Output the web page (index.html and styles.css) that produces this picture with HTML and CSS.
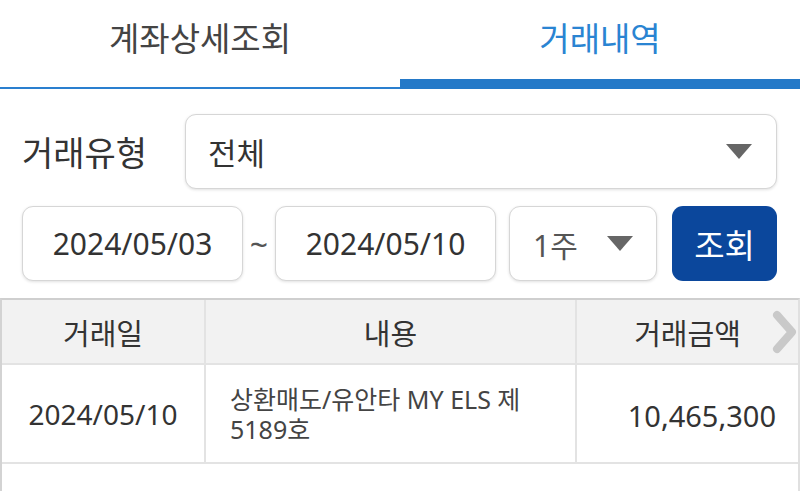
FILE: index.html
```html
<!DOCTYPE html>
<html lang="ko">
<head>
<meta charset="UTF-8" />
<meta name="viewport" content="width=device-width, initial-scale=1" />
<title>거래내역</title>
<link rel="stylesheet" href="styles.css">
</head>
<body>

<div class="tabs">
  <div class="tab">계좌상세조회</div>
  <div class="tab active">거래내역</div>
</div>

<div class="filter">
  <div class="row">
    <span class="label">거래유형</span>
    <div class="select wide">
      <span>전체</span>
      <span class="arrow"></span>
    </div>
  </div>
  <div class="row">
    <div class="date">2024/05/03</div>
    <span class="tilde">~</span>
    <div class="date">2024/05/10</div>
    <div class="select period">
      <span>1주</span>
      <span class="arrow"></span>
    </div>
    <button class="search">조회</button>
  </div>
</div>

<div class="grid">
  <div class="cell head">거래일</div>
  <div class="cell head">내용</div>
  <div class="cell head amount-head">
    거래금액
    <svg class="more" width="26" height="44" viewBox="0 0 26 44">
      <polyline points="5,5 20,22 5,39" fill="none" stroke="#c9c9c9" stroke-width="8" stroke-linecap="round" stroke-linejoin="round" />
    </svg>
  </div>
  <div class="cell day">2024/05/10</div>
  <div class="cell desc">
    <span class="line">상환매도/유안타 MY ELS 제</span>
    <span class="line">5189호</span>
  </div>
  <div class="cell amount">10,465,300</div>
  <div class="cell empty"></div>
</div>

</body>
</html>
```

FILE: styles.css
```css
body {
  margin: 0;
  padding: 0;
  background: #fff;
  color: #333;
  font-family: "Noto Sans", "Noto Sans CJK KR", sans-serif;
}
.tabs {
  display: flex;
}
.tab {
  flex: 1;
  box-sizing: border-box;
  height: 89px;
  padding-top: 17px;
  text-align: center;
  font-size: 33px;
  line-height: 44px;
  color: #444;
  border-bottom: 2px solid #2a7fcf;
}
.tab.active {
  color: #2a84d2;
  border-bottom: 10px solid #2479c8;
}
.filter {
  padding: 25px 23px 0 22px;
}
.row {
  display: flex;
  align-items: center;
  height: 75px;
  margin-bottom: 17px;
}
.label {
  width: 163px;
  font-size: 34px;
  color: #333;
}
.select, .date {
  box-sizing: border-box;
  height: 75px;
  border: 1px solid #d6d6d6;
  border-radius: 11px;
  box-shadow: 0 1px 3px rgba(0,0,0,0.12);
  background: #fff;
  display: flex;
  align-items: center;
}
.select.wide {
  flex: 1;
  justify-content: space-between;
  padding: 0 24px 0 22px;
  font-size: 31px;
}
.arrow {
  width: 0;
  height: 0;
  border-left: 13px solid transparent;
  border-right: 13px solid transparent;
  border-top: 15px solid #666;
}
.date {
  width: 221px;
  justify-content: center;
  font-size: 30px;
}
.tilde {
  width: 32px;
  text-align: center;
  font-size: 32px;
  color: #555;
}
.select.period {
  width: 148px;
  margin-left: 13px;
  justify-content: space-between;
  padding: 0 23px 0 23px;
  font-size: 30px;
  color: #555;
}
.search {
  width: 105px;
  height: 75px;
  margin-left: 15px;
  border: none;
  border-radius: 11px;
  background: #0b479c;
  color: #fff;
  font-family: inherit;
  font-size: 33px;
  padding: 0;
}
.grid {
  margin-top: 14px;
  display: grid;
  grid-template-columns: 204px 371px 1fr;
  grid-template-rows: 65px 99px 40px;
  border-top: 2px solid #cfcfcf;
  border-left: 2px solid #d3d3d3;
  border-right: 2px solid #e0e0e0;
}
.cell {
  display: flex;
  align-items: center;
  border-bottom: 2px solid #e3e3e3;
  border-right: 2px solid #e3e3e3;
  font-size: 28px;
  color: #333;
}
.cell:nth-child(3n), .cell.empty {
  border-right: none;
}
.head {
  background: #f2f2f2;
  justify-content: center;
  font-size: 29px;
}
.amount-head {
  position: relative;
}
.more {
  position: absolute;
  right: 0;
  top: 10px;
}
.day {
  justify-content: center;
}
.desc {
  flex-direction: column;
  align-items: flex-start;
  justify-content: center;
  padding-left: 24px;
  font-size: 25px;
  color: #444;
}
.line {
  display: block;
  height: 30px;
  line-height: 30px;
  overflow: visible;
}
.amount {
  justify-content: flex-end;
  padding-right: 22px;
  padding-top: 4px;
  box-sizing: border-box;
  font-size: 29px;
}
.empty {
  grid-column: 1 / 4;
  border-bottom: none;
}
```
